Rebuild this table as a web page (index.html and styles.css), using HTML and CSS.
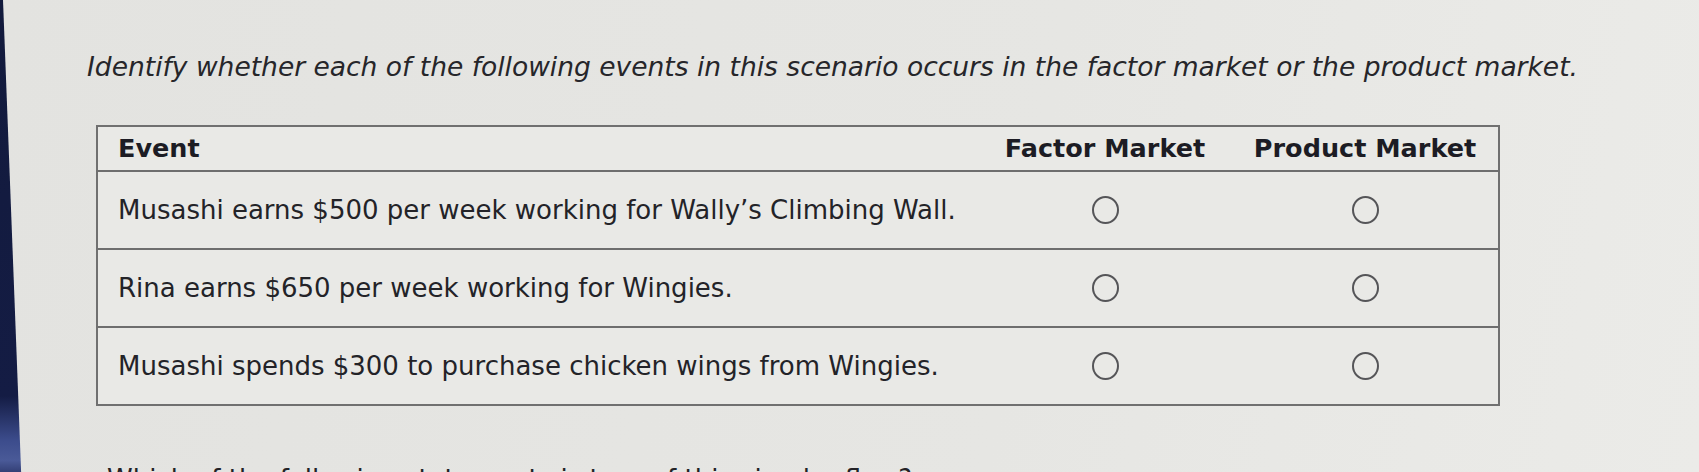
FILE: index.html
```html
<!DOCTYPE html>
<html lang="en">
<head>
<meta charset="utf-8">
<title>Factor market or product market</title>
<link rel="stylesheet" href="styles.css">
</head>
<body>
<div class="page">
  <div class="edge"></div>
  <main class="content">
    <p class="prompt">Identify whether each of the following events in this scenario occurs in the factor market or the product market.</p>
    <table class="grid">
      <thead>
        <tr class="head-row">
          <th class="col-event">Event</th>
          <th class="col-choice">Factor Market</th>
          <th class="col-choice">Product Market</th>
        </tr>
      </thead>
      <tbody>
        <tr class="row">
          <td class="cell-event">Musashi earns $500 per week working for Wally’s Climbing Wall.</td>
          <td class="cell-choice"><span class="radio"></span></td>
          <td class="cell-choice"><span class="radio"></span></td>
        </tr>
        <tr class="row">
          <td class="cell-event">Rina earns $650 per week working for Wingies.</td>
          <td class="cell-choice"><span class="radio"></span></td>
          <td class="cell-choice"><span class="radio"></span></td>
        </tr>
        <tr class="row">
          <td class="cell-event">Musashi spends $300 to purchase chicken wings from Wingies.</td>
          <td class="cell-choice"><span class="radio"></span></td>
          <td class="cell-choice"><span class="radio"></span></td>
        </tr>
      </tbody>
    </table>
    <p class="next">Which of the following statements is true of this circular flow?</p>
  </main>
</div>
</body>
</html>
```

FILE: styles.css
```css
html, body {
  margin: 0;
  padding: 0;
  height: 100%;
  overflow: hidden;
}

body {
  background: linear-gradient(100deg, #e3e3e0 0%, #e6e6e3 60%, #ebebe8 100%);
  font-family: "DejaVu Sans", Verdana, sans-serif;
  color: #222226;
}

.page {
  display: flex;
  min-height: 100%;
}

.edge {
  flex: none;
  width: 22px;
  background: linear-gradient(180deg, #121a3c 0%, #141c44 80%, #3c4c8c 89%, #4a5a98 93%, #1a2250 98%);
  clip-path: polygon(0 0, 3px 0, 22px 100%, 0 100%);
}

.content {
  flex: 1;
  padding: 51px 0 0 65px;
}

.prompt {
  margin: 0;
  font-size: 26.5px;
  line-height: 32px;
  font-style: italic;
  color: #26262a;
  white-space: nowrap;
}

.grid {
  margin: 42px 0 0 9px;
  width: 1404px;
  border-collapse: collapse;
  border: 2px solid #707070;
  background: #e9e9e6;
}

.head-row {
  height: 45px;
}

.head-row th {
  font-size: 25.5px;
  font-weight: bold;
  color: #1c1c24;
  padding: 0 20px 2px;
  border-bottom: 2px solid #6e6e6e;
  vertical-align: middle;
}

.col-event {
  text-align: left;
}

.col-choice {
  text-align: center;
  white-space: nowrap;
}

.col-choice:nth-child(2) {
  width: 214px;
}

.col-choice:nth-child(3) {
  width: 226px;
}

.row {
  height: 78px;
}

.row + .row td,
.row:first-child td {
  border-top: 2px solid #6e6e6e;
}

.cell-event {
  font-size: 26px;
  padding: 0 20px;
  vertical-align: middle;
  color: #232328;
}

.cell-choice {
  text-align: center;
  vertical-align: middle;
}

.radio {
  display: inline-block;
  width: 23px;
  height: 24px;
  border: 2px solid #555558;
  border-radius: 50%;
  vertical-align: middle;
}

.next {
  margin: 57px 0 0 20px;
  font-size: 26px;
  line-height: 32px;
  color: #222226;
}
```
